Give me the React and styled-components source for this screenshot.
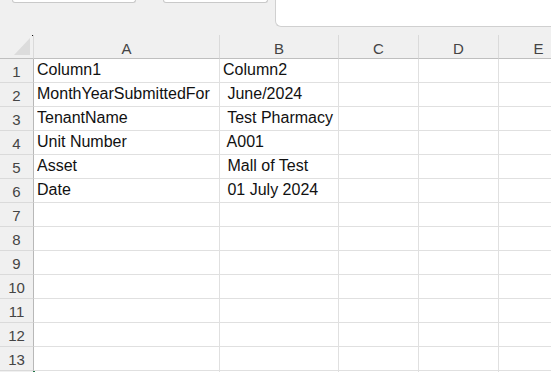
import React from "react";
import styled, { createGlobalStyle } from "styled-components";

const Global = createGlobalStyle`
  html, body { margin: 0; padding: 0; background: #f0f0f0; overflow: hidden; }
  body { font-family: "Liberation Sans", Arial, sans-serif; }
`;

const Page = styled.div`
  width: 551px;
  height: 372px;
  overflow: hidden;
  background: #f0f0f0;
  display: flex;
  flex-direction: column;
`;

const TopBar = styled.div`
  height: 35px;
  display: flex;
  align-items: flex-start;
  flex-shrink: 0;
`;

const TabBox = styled.div`
  margin-left: ${(p) => p.$gap}px;
  width: ${(p) => p.$w}px;
  height: ${(p) => p.$h}px;
  background: #fff;
  border: 1px solid #c9c9c9;
  border-top: none;
  border-radius: 0 0 5px 5px;
  box-sizing: border-box;
`;

const FormulaBox = styled.div`
  margin-left: 7px;
  flex: 1;
  height: 27px;
  background: #fff;
  border: 1px solid #d0d0d0;
  border-top: none;
  border-right: none;
  border-radius: 0 0 0 6px;
  box-sizing: border-box;
`;

const Grid = styled.div`
  display: grid;
  grid-template-columns: 34px 186px 119px 80px 80px 80px;
  grid-auto-rows: 24px;
  position: relative;
`;

const Corner = styled.div`
  background: #f0f0f0;
  border-right: 1px solid #dadada;
  border-bottom: 1px solid #bfbfbf;
  box-sizing: border-box;
  display: flex;
  align-items: flex-end;
  justify-content: flex-end;
  padding: 0 3px 3px 0;
  position: relative;
`;

const Dot = styled.span`
  position: absolute;
  right: 0;
  top: 0;
  width: 1px;
  height: 1px;
  background: #111;
`;

const ColHead = styled.div`
  background: #f0f0f0;
  border-right: 1px solid #dadada;
  border-bottom: 1px solid #bfbfbf;
  box-sizing: border-box;
  display: flex;
  align-items: center;
  justify-content: center;
  padding-top: 3px;
  font-size: 15px;
  color: #444;
`;

const RowHead = styled.div`
  background: #f0f0f0;
  border-right: 1px solid #b8b8b8;
  border-bottom: 1px solid #dadada;
  box-sizing: border-box;
  display: flex;
  align-items: center;
  justify-content: center;
  padding-top: 2px;
  font-size: 15px;
  color: #444;
`;

const Cell = styled.div`
  background: #fff;
  border-right: 1px solid #e0e0e0;
  border-bottom: 1px solid #e0e0e0;
  box-sizing: border-box;
  display: flex;
  align-items: flex-end;
  padding: 0 0 3px ${(p) => p.$pad}px;
  font-size: 16px;
  color: #111;
  white-space: pre;
  overflow: hidden;
`;

const ClipWrap = styled.span`
  display: block;
  overflow: hidden;
  width: 100%;
`;

const SelMark = styled.span`
  position: absolute;
  left: 33px;
  top: 336px;
  width: 2px;
  height: 2px;
  background: #217346;
  z-index: 3;
`;

const cols = ["A", "B", "C", "D", "E"];
const data = [
  ["Column1", "Column2"],
  ["MonthYearSubmittedFor", " June/2024"],
  ["TenantName", " Test Pharmacy"],
  ["Unit Number", " A001"],
  ["Asset", " Mall of Test"],
  ["Date", " 01 July 2024"],
];

export default function App() {
  const rows = Array.from({ length: 14 }, (_, i) => data[i] || []);
  return (
    <>
      <Global />
      <Page>
        <TopBar>
          <TabBox $gap={12} $w={124} $h={3} />
          <TabBox $gap={27} $w={105} $h={3} />
          <FormulaBox />
        </TopBar>
        <Grid>
          <Corner>
            <Dot />
            <svg width="16" height="17" viewBox="0 0 16 17">
              <polygon points="16,0 16,17 0,17" fill="#dcdcdc" />
            </svg>
          </Corner>
          {cols.map((c) => (
            <ColHead key={c}>{c}</ColHead>
          ))}
          {rows.map((r, i) => (
            <React.Fragment key={i}>
              <RowHead>{i < 13 ? i + 1 : ""}</RowHead>
              <Cell $pad={3}>
                <ClipWrap>{r[0] || ""}</ClipWrap>
              </Cell>
              <Cell $pad={3}>{r[1] || ""}</Cell>
              <Cell />
              <Cell />
              <Cell />
            </React.Fragment>
          ))}
          <SelMark />
        </Grid>
      </Page>
    </>
  );
}
